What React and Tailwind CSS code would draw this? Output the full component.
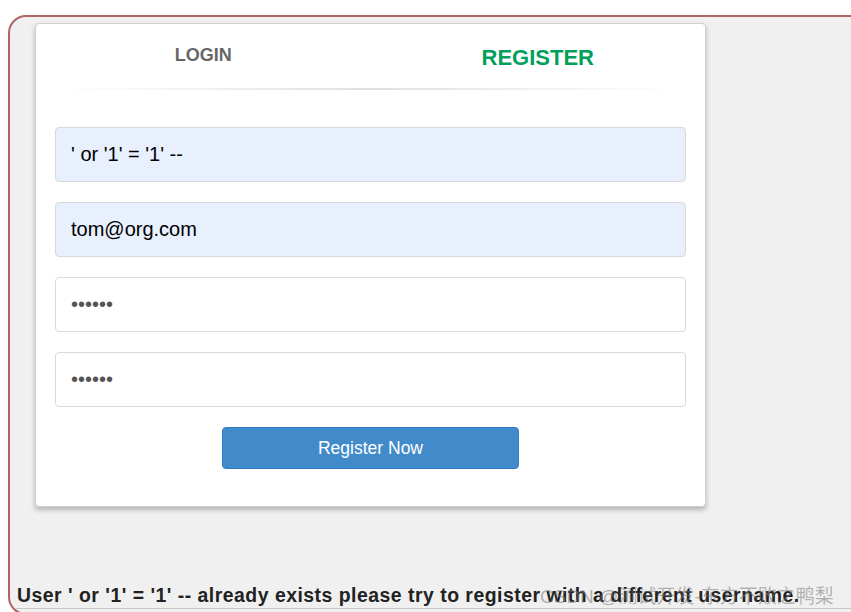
import React, { useState } from "react";

const font = { fontFamily: '"Liberation Sans", Arial, sans-serif' };

export default function App() {
    const [username, setUsername] = useState("' or '1' = '1' --");
    const [email, setEmail] = useState("tom@org.com");
    const [password, setPassword] = useState("123456");
    const [confirm, setConfirm] = useState("123456");

    const inputClasses =
        "w-full h-[55px] px-[15px] border border-[#d9d9d9] rounded-[4px] text-[20px] outline-none";

    return (
        <div className="h-[612px] w-[851px] overflow-hidden bg-white pt-[15px] pl-[8px]" style={font}>
            <div className="relative w-[880px] h-[600px] border-2 border-[#b26464] rounded-l-[18px] bg-[#f0f0f0] pt-[6px] pl-[25px]">
                {/* card */}
                <div className="w-[671px] h-[484px] bg-white border border-[#d0d0d0] rounded-[4px] shadow-[0_3px_5px_rgba(0,0,0,0.25)] px-[19px]">
                    <div className="flex h-[64px] -mx-[19px]">
                        <div className="flex-1 flex items-center justify-center pb-[2px]">
                            <span className="text-[18px] font-bold text-[#666]">LOGIN</span>
                        </div>
                        <div className="flex-1 flex items-center justify-center pt-[3px]">
                            <span className="text-[22px] font-bold text-[#029f5b]">REGISTER</span>
                        </div>
                    </div>
                    <div className="h-[2px] mx-[6px] bg-gradient-to-r from-transparent via-[#e0e0e0] to-transparent" />

                    <div className="flex flex-col gap-[20px] pt-[37px]">
                        <input
                            className={`${inputClasses} bg-[#e8f0fe] text-black`}
                            value={username}
                            onChange={(e) => setUsername(e.target.value)}
                        />
                        <input
                            className={`${inputClasses} bg-[#e8f0fe] text-black`}
                            value={email}
                            onChange={(e) => setEmail(e.target.value)}
                        />
                        <input
                            type="password"
                            className={`${inputClasses} bg-white text-[#555]`}
                            value={password}
                            onChange={(e) => setPassword(e.target.value)}
                        />
                        <input
                            type="password"
                            className={`${inputClasses} bg-white text-[#555]`}
                            value={confirm}
                            onChange={(e) => setConfirm(e.target.value)}
                        />
                        <div className="flex justify-center">
                            <button
                                type="button"
                                className="w-[297px] h-[42px] bg-[#428bca] border border-[#357ebd] rounded-[4px] text-white text-[17.5px]"
                            >
                                Register Now
                            </button>
                        </div>
                    </div>
                </div>

                {/* mensagem de erro */}
                <div className="mt-[77px] -ml-[18px]">
                    <p className="text-[19.4px] font-bold text-[#222] leading-[22px] tracking-[0.5px] whitespace-nowrap">
                        User ' or '1' = '1' -- already exists please try to register with a different username.
                    </p>
                    <div className="mt-[2px] h-px bg-[#c8c8c8] -ml-[1px]" />
                </div>

                {/* marca d'água */}
                <div className="absolute left-[530px] top-[566px] text-[19px] text-[rgba(120,120,120,0.55)] whitespace-nowrap" style={{ fontFamily: '"Liberation Sans", "Noto Sans CJK SC", sans-serif' }}>
                    CSDN @测试开发-东方不败之鸭梨
                </div>
            </div>
        </div>
    );
}
